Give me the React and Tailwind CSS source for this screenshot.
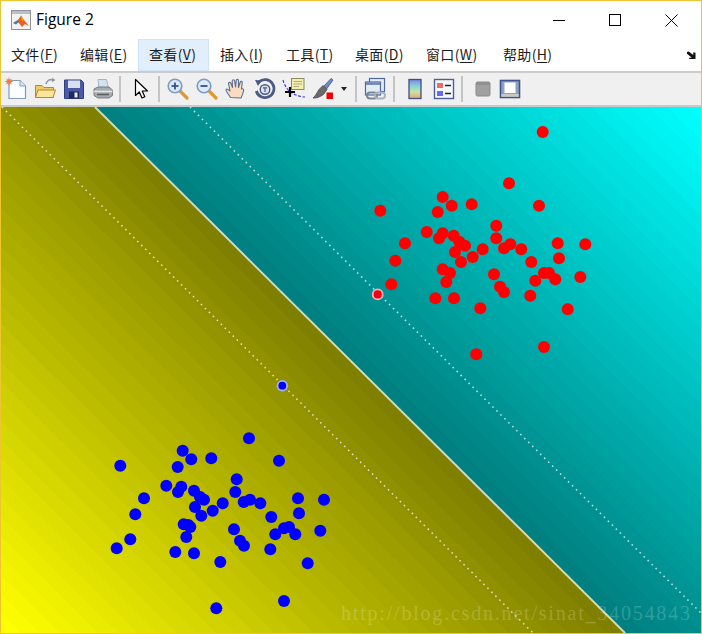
import React from "react";

const red = [[542.7,132],[509,183.3],[442.7,197],[451.7,205.7],[471.7,204.3],[539,205.7],[380.3,210.7],[437.7,212],[496.3,225.7],[426.7,232],[442.7,233.3],[439,238.3],[496.3,238.3],[453.7,235.7],[405,243.3],[459.3,241.7],[465,245.7],[455,252],[482.7,249.3],[504,248.3],[510.3,244.3],[521.3,249.3],[557.7,243.3],[585.3,244.3],[472.7,257],[461,262],[559,258.3],[531.3,262],[395.3,260.7],[442.7,269.3],[450,273],[494,274.3],[544,273],[549,273],[580.3,277],[535.3,280.7],[555.3,279.3],[446.3,282],[391.3,284.3],[500,286.7],[504,292],[530.3,295.7],[435.3,298.3],[454,298.3],[480.3,308.3],[567.7,309.3],[544,347],[476.3,354.3]];
const blue = [[249,438.3],[182.7,450.7],[191.3,459.3],[211.3,458.3],[120.3,465.7],[279,460.7],[177.7,467],[236.7,479.3],[166.3,485.7],[181.3,486.7],[178,492],[194,490.7],[235.3,492],[144,498.3],[200,497],[204,499.7],[298,498.3],[324,499.7],[222.7,503.3],[243.7,502],[250,499.7],[260.3,503.3],[195,507],[212.7,510.7],[201.3,515.7],[135.3,514.3],[299,513.3],[271.3,517],[183.7,524.3],[188.3,525],[190.3,527],[234,529.3],[284,528.3],[289,527],[275.3,534.3],[295.3,534.3],[320.3,530.7],[186.3,537],[130.3,539.3],[240,540.7],[244,545.7],[116.7,548.3],[175.3,552],[194,553.3],[270.3,549.3],[220.3,562],[307.7,563.3],[284,601],[216.3,608.3]];

const menus = [
  ["文件", "F", "w-[68px] pl-[10px]"],
  ["编辑", "E", "w-[69px] pl-[11px]"],
  ["查看", "V", "w-[71px] pl-[10px] border border-[#cfe4f8] bg-[#e1eefb]"],
  ["插入", "I", "w-[66px] pl-[11px]"],
  ["工具", "T", "w-[69px] pl-[11px]"],
  ["桌面", "D", "w-[71px] pl-[11px]"],
  ["窗口", "W", "w-[77px] pl-[11px]"],
  ["帮助", "H", "w-[70px] pl-[11px]"],
];

function stops() {
  const out = [];
  const min = -440, max = 430, n = 32;
  const at = (v) => ((v - min) / (max - min)) * 100 + "%";
  const lev = (i) => Math.round(128 + (i * 127) / (n - 1));
  for (let i = n - 1; i >= 0; i--) {
    const a = -((i + 1) * 440) / n, b = -(i * 440) / n;
    const c = `rgb(${lev(i)},${lev(i)},0)`;
    out.push(<stop key={"y" + i + "a"} offset={at(a)} stopColor={c} />, <stop key={"y" + i + "b"} offset={at(b)} stopColor={c} />);
  }
  for (let i = 0; i < n; i++) {
    const a = (i * 430) / n, b = ((i + 1) * 430) / n;
    const c = `rgb(0,${lev(i)},${lev(i)})`;
    out.push(<stop key={"c" + i + "a"} offset={at(a)} stopColor={c} />, <stop key={"c" + i + "b"} offset={at(b)} stopColor={c} />);
  }
  return out;
}

function Plot() {
  const nx = 0.7037, ny = -0.7104, ox = 94, oy = 0;
  return (
    <svg className="block h-full w-full" viewBox="0 0 700 526" preserveAspectRatio="none">
      <defs>
        <linearGradient id="field" gradientUnits="userSpaceOnUse" x1={ox - 440 * nx} y1={oy - 440 * ny} x2={ox + 430 * nx} y2={oy + 430 * ny}>
          {stops()}
        </linearGradient>
      </defs>
      <rect x="0" y="0" width="700" height="526" fill="url(#field)" />
      <line x1="1" y1="0" x2="532" y2="526" stroke="#fff" strokeOpacity="0.7" strokeWidth="1.6" strokeDasharray="1.6 4" />
      <line x1="189" y1="0" x2="701" y2="507" stroke="#fff" strokeOpacity="0.7" strokeWidth="1.6" strokeDasharray="1.6 4" />
      <line x1="94" y1="0" x2="624" y2="526" stroke="#fff" strokeOpacity="0.7" strokeWidth="2" />
      {red.map(([x, y], i) => <circle key={i} cx={x - 1} cy={y - 107} r="6" fill="#ff0000" />)}
      {blue.map(([x, y], i) => <circle key={i} cx={x - 1} cy={y - 107} r="6" fill="#0000ff" />)}
      <circle cx="376.7" cy="187.4" r="5" fill="#f00010" stroke="#ffb0b8" strokeWidth="1.8" />
      <circle cx="281.3" cy="278.7" r="4.8" fill="#0000ff" stroke="#a8b0f0" strokeWidth="1.8" />
    </svg>
  );
}

function MatlabIcon() {
  return (
    <svg width="20" height="20" viewBox="0 0 20 20">
      <rect x="0.5" y="0.5" width="19" height="19" fill="#f2f2f2" stroke="#8e939b" />
      <rect x="1" y="1" width="18" height="3" fill="#b9bfc8" />
      <path d="M2 13 L7 10 L10 5.5 L13 10 L18 16 L14 14 L11 17 L7.5 12.5 Z" fill="#e8621e" />
      <path d="M2 13 L7 10 L8 12 L5 14.5 Z" fill="#3f7fb5" />
      <path d="M10 5.5 L13 10 L11 11 Z" fill="#f6a01f" />
    </svg>
  );
}

const S = ({ children }) => <svg width="24" height="24" viewBox="0 0 24 24">{children}</svg>;

const NewIcon = () => (
  <S>
    <path d="M5 3.5 H16 L21.5 9 V21.5 H5 Z" fill="#fbfdff" stroke="#7f9cc4" strokeWidth="1.2" />
    <path d="M16 3.5 V9 H21.5" fill="#dbe6f4" stroke="#7f9cc4" strokeWidth="1" />
    <circle cx="5" cy="4.5" r="2.6" fill="#f59a55" />
    <path d="M5 0.5 V8.5 M1 4.5 H9 M2.2 1.7 L7.8 7.3 M7.8 1.7 L2.2 7.3" stroke="#ee6a35" strokeWidth="0.7" />
  </S>
);
const OpenIcon = () => (
  <S>
    <path d="M13 7 C14 3 17 2 20 3" fill="none" stroke="#8f9aa8" strokeWidth="1.6" />
    <path d="M19 0.8 L22.5 3 L19 5.2 Z" fill="#8f9aa8" />
    <path d="M2.5 20.5 V8.5 H9 L11 10.5 H20.5 V20.5 Z" fill="#f0c968" stroke="#b08a32" />
    <path d="M2.5 20.5 L5 13 H22.5 L20 20.5 Z" fill="#fbe59a" stroke="#b08a32" />
  </S>
);
const SaveIcon = () => (
  <S>
    <path d="M2.5 3 H19 L21.5 5.5 V21.5 H2.5 Z" fill="#4a5aa8" stroke="#2f3d84" />
    <rect x="6" y="3.5" width="12" height="7.5" fill="#d9dfef" />
    <rect x="7" y="14.5" width="10" height="7" fill="#1f2a55" />
    <rect x="12.5" y="15.5" width="3" height="5" fill="#e7ebf5" />
  </S>
);
const PrintIcon = () => (
  <S>
    <path d="M7 2.5 H15.5 L17.5 11 H8 Z" fill="#d2e3ee" stroke="#9fb0bc" strokeWidth="0.9" />
    <path d="M3 12 L7 10 H18 L21.5 13 V18.5 L18 21 H7 L3 18.5 Z" fill="#a8acae" stroke="#6e7376" strokeWidth="0.9" />
    <path d="M3 14.5 L21.5 14.5" stroke="#e2e4e5" strokeWidth="1.6" />
    <path d="M6 17.5 H18" stroke="#5c6163" strokeWidth="1.6" />
  </S>
);
const CursorIcon = () => (
  <S>
    <path d="M6.5 2.5 V18.5 L10.3 15 L13 21 L15.8 19.8 L13.2 14 L18.5 14 Z" fill="#fff" stroke="#000" strokeWidth="1.2" strokeLinejoin="round" />
  </S>
);
const Lens = ({ plus }) => (
  <S>
    <path d="M13.5 13.5 L21 21" stroke="#e0982f" strokeWidth="3.2" strokeLinecap="round" />
    <circle cx="9" cy="9" r="6.8" fill="#dce9f7" stroke="#7c9cc6" strokeWidth="1.6" />
    <path d="M5.5 9 H12.5" stroke="#35508f" strokeWidth="1.8" />
    {plus && <path d="M9 5.5 V12.5" stroke="#35508f" strokeWidth="1.8" />}
  </S>
);
const HandIcon = () => (
  <S>
    <path d="M6.5 20.5 C4.5 17 2 14.5 2 13 C2.3 11.5 4 12 6 14 L4.5 6.5 C4.5 5 6.3 5 7 6.5 L8.5 10.5 L8.2 3.8 C8.3 2.3 10.3 2.3 10.6 3.8 L11.6 10 L12.3 3.2 C12.6 1.8 14.5 2 14.5 3.6 L14.5 10.5 L16.3 5 C16.8 3.8 18.5 4.3 18.2 5.8 L17.5 12 C19 11.5 20 12 19.5 14 C19 17 18 19 17 21 Z" fill="#f9dcc0" stroke="#5a6f94" strokeWidth="1.1" strokeLinejoin="round" />
  </S>
);
const RotateIcon = () => (
  <S>
    <path d="M6 4.8 A9 9 0 1 1 3.3 14" fill="none" stroke="#4a5c80" strokeWidth="2.8" />
    <path d="M2 3 L9 3.5 L5 9 Z" fill="#4a5c80" />
    <circle cx="12" cy="12.5" r="4.8" fill="#dbe2ee" stroke="#4a5c80" strokeWidth="1.4" />
    <path d="M10 10.8 H14 M12 10.8 V15" stroke="#4a5c80" strokeWidth="1.2" />
  </S>
);
const DataIcon = () => (
  <S>
    <path d="M1 3 C3 11 9 19 23 20" fill="none" stroke="#3434d8" strokeWidth="1.1" strokeDasharray="3 1.6" />
    <rect x="9.5" y="1.5" width="12.5" height="11" fill="#f3edb0" stroke="#8d8a5c" />
    <path d="M11.5 4.5 H20 M11.5 7 H20 M11.5 9.5 H17" stroke="#9c9a6e" strokeWidth="0.8" />
    <path d="M8 10 V20 M3 15 H13" stroke="#000" strokeWidth="2.2" />
  </S>
);
const BrushIcon = () => (
  <S>
    <path d="M12.5 9.5 L20 1.5 L22 3 L15.5 12 Z" fill="#6f8bc8" stroke="#37518f" strokeWidth="0.8" />
    <path d="M12 8.5 L16 12.5 L12.5 17.5 C9 20 5 21.5 2 21 C5 18.5 6 15.5 8 12.5 Z" fill="#6a6a6a" stroke="#4a4a4a" strokeWidth="0.8" />
    <rect x="15.5" y="15.5" width="6.5" height="6.5" fill="#f00000" />
  </S>
);
const LinkIcon = () => (
  <S>
    <rect x="6.5" y="1.5" width="15" height="13" fill="#e6ecf6" stroke="#4f6aa3" strokeWidth="1.2" />
    <rect x="2.5" y="5" width="15" height="13" fill="#e6ecf6" stroke="#4f6aa3" strokeWidth="1.2" />
    <rect x="3" y="5.5" width="14" height="2.4" fill="#6f88bb" />
    <rect x="4" y="15.5" width="10" height="6" rx="3" fill="none" stroke="#7a8694" strokeWidth="2" />
    <rect x="12" y="15.5" width="10" height="6" rx="3" fill="none" stroke="#a9b2bc" strokeWidth="2" />
  </S>
);
const ColorbarIcon = () => (
  <S>
    <defs>
      <linearGradient id="cb" x1="0" y1="0" x2="0" y2="1">
        <stop offset="0" stopColor="#7f86e0" />
        <stop offset="0.35" stopColor="#86d3dc" />
        <stop offset="0.65" stopColor="#c8e3a0" />
        <stop offset="1" stopColor="#f0a080" />
      </linearGradient>
    </defs>
    <rect x="6" y="2.5" width="12" height="19" fill="url(#cb)" stroke="#3f4f86" strokeWidth="1.3" />
  </S>
);
const LegendIcon = () => (
  <S>
    <rect x="2.5" y="2.5" width="19" height="19" fill="#f7f8fc" stroke="#4d5f9b" strokeWidth="1.4" />
    <rect x="5" y="6" width="6" height="5" fill="#ee6a6a" />
    <rect x="5" y="14" width="6" height="5" fill="#6a6af0" />
    <path d="M13 8.5 H19 M13 16.5 H19" stroke="#222" strokeWidth="1.3" />
  </S>
);
const GreyIcon = () => (
  <S>
    <rect x="5" y="5" width="14" height="14" rx="1.5" fill="#a0a0a0" stroke="#8d8d8d" />
    <rect x="5" y="5" width="14" height="3" fill="#8f8f8f" />
  </S>
);
const ToolsIcon = () => (
  <S>
    <rect x="2.5" y="3.5" width="19" height="17" fill="#8fa0c4" stroke="#3f5488" strokeWidth="1.6" />
    <rect x="6.5" y="5.5" width="11" height="10.5" fill="#fff" />
    <rect x="3.3" y="17" width="17.4" height="2.8" fill="#c9c9c4" />
  </S>
);

const Btn = ({ children, className = "" }) => <div className={"flex w-[29px] shrink-0 items-center justify-center " + className}>{children}</div>;
const Sep = ({ className = "" }) => <div className={"h-[26px] w-[2px] shrink-0 self-center bg-[#c4c4c4] " + className} />;

export default function App() {
  return (
    <div className="flex h-[634px] w-[702px] flex-col overflow-hidden border border-[#eec530] bg-white">
      <div className="flex h-[38px] shrink-0 items-center bg-white">
        <div className="ml-[10px] mr-[5px] flex"><MatlabIcon /></div>
        <span className="text-[15.5px] text-black [font-family:'Open_Sans',sans-serif]">Figure 2</span>
        <div className="ml-auto flex items-center">
          <div className="flex w-[57px] justify-center"><div className="h-[1px] w-[12px] bg-black" /></div>
          <div className="flex w-[56px] justify-center"><div className="h-[12px] w-[12px] border border-black" /></div>
          <div className="flex w-[56px] justify-center">
            <svg width="13" height="13" viewBox="0 0 13 13"><path d="M0.5 0.5 L12.5 12.5 M12.5 0.5 L0.5 12.5" stroke="#000" strokeWidth="1" /></svg>
          </div>
          <div className="w-[2px]" />
        </div>
      </div>

      <div className="flex h-[34px] shrink-0 items-center border-b-2 border-[#cbcbcb] bg-white text-[14px] tracking-[0.35px] text-[#1c1c1c] [font-family:'Noto_Sans_CJK_SC','Noto_Sans',sans-serif]">
        {menus.map(([zh, k, cls]) => (
          <div key={k} className={"flex h-full shrink-0 items-center whitespace-nowrap pb-[2px] " + cls}>
            {zh}(<span className="underline underline-offset-2">{k}</span>)
          </div>
        ))}
        <svg className="ml-auto mr-[5px]" width="10" height="9" viewBox="0 0 11 10">
          <path d="M1 1 L3 0.5 L8 4.5 V1.5 L10.5 2 V9 H3.5 V7.5 H6.5 L1 3 Z" fill="#111" />
        </svg>
      </div>

      <div className="flex h-[34px] shrink-0 items-stretch border-b-2 border-[#c9c9c9] bg-[#f0f0f0]">
        <Btn><NewIcon /></Btn>
        <Btn><OpenIcon /></Btn>
        <Btn><SaveIcon /></Btn>
        <Btn><PrintIcon /></Btn>
        <Sep className="ml-[2px] mr-[5px]" />
        <Btn><CursorIcon /></Btn>
        <Sep className="ml-[3px] mr-[3px]" />
        <Btn><Lens plus /></Btn>
        <Btn><Lens /></Btn>
        <Btn><HandIcon /></Btn>
        <Btn><RotateIcon /></Btn>
        <Btn><DataIcon /></Btn>
        <Btn><BrushIcon /></Btn>
        <div className="flex w-[14px] shrink-0 items-center justify-center">
          <div className="h-0 w-0 border-x-[3px] border-t-[4px] border-x-transparent border-t-[#222]" />
        </div>
        <Sep className="ml-[4px] mr-[3px]" />
        <Btn><LinkIcon /></Btn>
        <Sep className="ml-[4px] mr-[5px]" />
        <Btn><ColorbarIcon /></Btn>
        <Btn><LegendIcon /></Btn>
        <Sep className="ml-[3px] mr-[5px]" />
        <Btn><GreyIcon /></Btn>
        <Btn className="-ml-[2px]"><ToolsIcon /></Btn>
      </div>

      <div className="relative min-h-0 flex-1">
        <Plot />
        <div className="absolute bottom-[10px] left-[340px] whitespace-nowrap text-[20px] leading-none tracking-[1.8px] text-white/20 [font-family:'Liberation_Serif',serif]">
          http://blog.csdn.net/sinat_34054843
        </div>
      </div>
    </div>
  );
}
